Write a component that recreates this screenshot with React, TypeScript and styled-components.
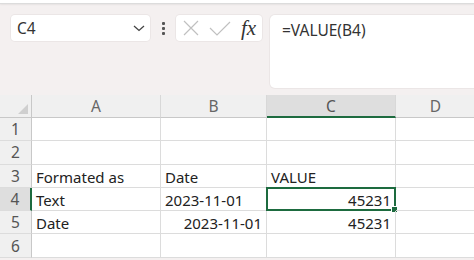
import styled, { createGlobalStyle } from 'styled-components';

const GlobalStyle = createGlobalStyle`
  body {
    margin: 0;
    background: #ffffff;
    font-family: 'Noto Sans', 'Open Sans', sans-serif;
    overflow: hidden;
  }
`;

const columns = [
  { name: 'A', width: 129 },
  { name: 'B', width: 106 },
  { name: 'C', width: 129 },
  { name: 'D', width: 80 },
];

type CellData = { text: string; align?: 'left' | 'right' };

const rows: CellData[][] = [
  [{ text: '' }, { text: '' }, { text: '' }, { text: '' }],
  [{ text: '' }, { text: '' }, { text: '' }, { text: '' }],
  [{ text: 'Formated as' }, { text: 'Date' }, { text: 'VALUE' }, { text: '' }],
  [{ text: 'Text' }, { text: '2023-11-01' }, { text: '45231', align: 'right' }, { text: '' }],
  [{ text: 'Date' }, { text: '2023-11-01', align: 'right' }, { text: '45231', align: 'right' }, { text: '' }],
  [{ text: '' }, { text: '' }, { text: '' }, { text: '' }],
];

const activeRow = 3;
const activeCol = 2;

const App = () => {
  return (
    <>
      <GlobalStyle />
      <StyledPage>
        <StyledTopStrip />
        <StyledFormulaBar>
          <StyledNameBox>
            <span>C4</span>
            <svg width="12" height="7" viewBox="0 0 12 7">
              <path d="M1 1 L6 5.5 L11 1" fill="none" stroke="#444" strokeWidth="1.3" />
            </svg>
          </StyledNameBox>
          <StyledDots>
            <i />
            <i />
            <i />
          </StyledDots>
          <StyledFxBox>
            <svg width="16" height="16" viewBox="0 0 16 16">
              <path d="M1 1 L15 15 M15 1 L1 15" fill="none" stroke="#c0c0c0" strokeWidth="1.2" />
            </svg>
            <svg width="22" height="15" viewBox="0 0 22 15">
              <path d="M1 7 L8 14 L21 1" fill="none" stroke="#c0c0c0" strokeWidth="1.2" />
            </svg>
            <StyledFx>fx</StyledFx>
          </StyledFxBox>
          <StyledFormulaInput>=VALUE(B4)</StyledFormulaInput>
        </StyledFormulaBar>

        <StyledGrid>
          <StyledCorner>
            <svg width="10" height="10" viewBox="0 0 10 10">
              <path d="M10 0 L10 10 L0 10 Z" fill="#cfcfcf" />
            </svg>
          </StyledCorner>
          {columns.map((col, i) => (
            <StyledColHeader key={col.name} $active={i === activeCol}>
              {col.name}
            </StyledColHeader>
          ))}
          {rows.map((row, r) => (
            <StyledRowGroup key={r}>
              <StyledRowHeader $active={r === activeRow}>{r + 1}</StyledRowHeader>
              {row.map((cell, c) => (
                <StyledCell key={c} $align={cell.align ?? 'left'}>
                  {cell.text}
                  {r === activeRow && c === activeCol && (
                    <StyledSelection>
                      <StyledHandle />
                    </StyledSelection>
                  )}
                </StyledCell>
              ))}
            </StyledRowGroup>
          ))}
        </StyledGrid>
      </StyledPage>
    </>
  );
};

const StyledPage = styled.div`
  width: 474px;
  height: 260px;
  background: #f4f0f0;
  overflow: hidden;
`;

const StyledTopStrip = styled.div`
  height: 3px;
  background: #ffffff;
  border-bottom: 1px solid #dcdcdc;
  box-shadow: 0 1px 2px rgba(0, 0, 0, 0.06);
`;

const StyledFormulaBar = styled.div`
  display: flex;
  align-items: flex-start;
  height: 91px;
  padding: 11px 0 0 11px;
  box-sizing: border-box;
`;

const StyledNameBox = styled.div`
  display: flex;
  align-items: center;
  justify-content: space-between;
  width: 139px;
  height: 26px;
  padding: 0 5px 0 6px;
  box-sizing: border-box;
  background: #ffffff;
  border-radius: 4px;
  box-shadow: 0 0 0 1px #ebe6e6;
  font-size: 15.5px;
  color: #333;
`;

const StyledDots = styled.div`
  display: flex;
  flex-direction: column;
  gap: 2px;
  width: 26px;
  height: 26px;
  align-items: center;
  justify-content: center;
  i {
    width: 3px;
    height: 3px;
    background: #555;
    border-radius: 1px;
  }
`;

const StyledFxBox = styled.div`
  display: flex;
  align-items: center;
  gap: 10px;
  width: 86px;
  height: 26px;
  padding: 0 0 0 7px;
  box-sizing: border-box;
  background: #ffffff;
  border-radius: 4px;
  box-shadow: 0 0 0 1px #ebe6e6;
`;

const StyledFx = styled.span`
  font-family: 'Liberation Serif', 'DejaVu Serif', serif;
  font-style: italic;
  font-size: 21px;
  color: #333;
  line-height: 1;
`;

const StyledFormulaInput = styled.div`
  flex: 1;
  height: 73px;
  margin-left: 8px;
  padding: 4px 0 0 12px;
  box-sizing: border-box;
  background: #ffffff;
  border-radius: 5px 0 0 5px;
  box-shadow: 0 0 0 1px #ebe6e6;
  font-size: 15.5px;
  color: #333;
`;

const StyledGrid = styled.div`
  display: grid;
  grid-template-columns: 32px 129px 106px 129px 80px;
  grid-template-rows: 23px repeat(6, 23.3px);
  background: #ffffff;
  font-size: 15px;
  color: #222;
`;

const StyledRowGroup = styled.div`
  display: contents;
`;

const StyledCorner = styled.div`
  display: flex;
  align-items: flex-end;
  justify-content: flex-end;
  padding: 0 3px 3px 0;
  background: #f0f0f0;
  border-right: 1px solid #c8c8c8;
  border-bottom: 1px solid #c8c8c8;
`;

const StyledColHeader = styled.div<{ $active: boolean }>`
  display: flex;
  align-items: center;
  justify-content: center;
  background: ${({ $active }) => ($active ? '#dedede' : '#f0f0f0')};
  border-right: 1px solid #d8d8d8;
  border-bottom: ${({ $active }) => ($active ? '2px solid #1d6b3f' : '1px solid #c8c8c8')};
  color: ${({ $active }) => ($active ? '#555' : '#666')};
  font-size: 15.5px;
  box-sizing: border-box;
`;

const StyledRowHeader = styled.div<{ $active: boolean }>`
  display: flex;
  align-items: center;
  justify-content: center;
  background: ${({ $active }) => ($active ? '#dedede' : '#f0f0f0')};
  border-right: ${({ $active }) => ($active ? '2px solid #1d6b3f' : '1px solid #c8c8c8')};
  border-bottom: 1px solid #dcdcdc;
  color: #555;
  font-size: 15.5px;
  box-sizing: border-box;
`;

const StyledCell = styled.div<{ $align: 'left' | 'right' }>`
  position: relative;
  display: flex;
  align-items: flex-end;
  justify-content: ${({ $align }) => ($align === 'right' ? 'flex-end' : 'flex-start')};
  padding: 0 4px 0 4px;
  border-right: 1px solid #dcdcdc;
  border-bottom: 1px solid #dcdcdc;
  box-sizing: border-box;
  white-space: nowrap;
`;

const StyledSelection = styled.div`
  position: absolute;
  left: -1px;
  top: -1px;
  right: -1px;
  bottom: -1px;
  border: 2px solid #1d6b3f;
  pointer-events: none;
`;

const StyledHandle = styled.div`
  position: absolute;
  right: -4px;
  bottom: -4px;
  width: 5px;
  height: 5px;
  background: #1d6b3f;
  border: 1px solid #ffffff;
`;

export default App;
